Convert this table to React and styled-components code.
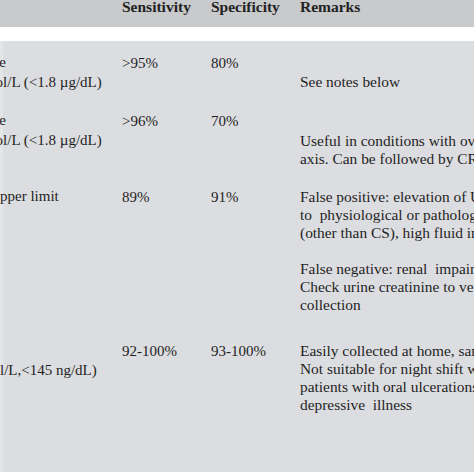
import React from 'react';
import styled, { createGlobalStyle } from 'styled-components';

const GlobalStyle = createGlobalStyle`
  html, body {
    margin: 0;
    padding: 0;
    background: #ffffff;
    overflow: hidden;
  }
  body {
    font-family: "Liberation Serif", "Times New Roman", serif;
    color: #1f1f1f;
  }
`;

const rows = [
  {
    height: 58,
    label: [{ text: 'e', shift: -0.8 }, { text: 'ol/L (<1.8 \u00b5g/dL)', shift: -4.4 }],
    sensitivity: '>95%',
    specificity: '80%',
    remarksOffset: 20,
    remarks: ['See notes below'],
  },
  {
    height: 76,
    label: [{ text: 'e', shift: -0.8 }, { text: 'ol/L (<1.8 \u00b5g/dL)', shift: -4.4 }],
    sensitivity: '>96%',
    specificity: '70%',
    remarksOffset: 21,
    remarks: ['Useful in conditions with overactive HPA', 'axis. Can be followed by CRH test'],
  },
  {
    height: 154,
    label: [{ text: 'pper limit', shift: 0 }],
    sensitivity: '89%',
    specificity: '91%',
    remarksOffset: 1,
    remarks: [
      'False positive: elevation of UFC due',
      'to  physiological or pathological hypercortisolism',
      '(other than CS), high fluid intake',
      '',
      'False negative: renal  impairment.',
      'Check urine creatinine to verify',
      'collection',
    ],
  },
  {
    height: 143,
    label: [{ text: '', shift: 0 }, { text: 'l/L,<145 ng/dL)', shift: 0 }],
    sensitivity: '92-100%',
    specificity: '93-100%',
    remarksOffset: 1,
    remarks: [
      'Easily collected at home, samples stable',
      'Not suitable for night shift workers,',
      'patients with oral ulcerations, or',
      'depressive  illness',
    ],
  },
];

const App = () => (
  <>
    <GlobalStyle />
    <Page>
      <HeaderBar>
        <HeadCell />
        <HeadCell>Sensitivity</HeadCell>
        <HeadCell>Specificity</HeadCell>
        <HeadCell>Remarks</HeadCell>
      </HeaderBar>
      <Gap />
      <Body>
        {rows.map((row, i) => (
          <Row key={i} height={row.height}>
            <LabelCell>
              {row.label.map((l, j) => (
                <LabelLine key={j} shift={l.shift}>
                  {l.text || '\u00a0'}
                </LabelLine>
              ))}
            </LabelCell>
            <ValueCell>{row.sensitivity}</ValueCell>
            <ValueCell>{row.specificity}</ValueCell>
            <RemarksCell offset={row.remarksOffset}>
              {row.remarks.map((r, j) => (
                <RemarkLine key={j}>{r || '\u00a0'}</RemarkLine>
              ))}
            </RemarksCell>
          </Row>
        ))}
      </Body>
    </Page>
  </>
);

export default App;

const columns = '122px 89px 89px 1fr';

const Page = styled.div`
  width: 474px;
  height: 474px;
  overflow: hidden;
  display: flex;
  flex-direction: column;
`;

const HeaderBar = styled.div`
  display: grid;
  grid-template-columns: ${columns};
  height: 27px;
  flex-shrink: 0;
  background: #c9cacc;
`;

const HeadCell = styled.div`
  font-size: 15.5px;
  font-weight: 700;
  line-height: 14px;
  color: #222;
  white-space: nowrap;
`;

const Gap = styled.div`
  height: 14px;
  flex-shrink: 0;
  background: #ffffff;
`;

const Body = styled.div`
  flex-shrink: 0;
  background: linear-gradient(to right, #e4e5e7 0 3px, #dcdde0 3px);
`;

const Row = styled.div`
  display: grid;
  grid-template-columns: ${columns};
  height: ${(p) => p.height}px;
  box-sizing: border-box;
  padding-top: 12px;
  font-size: 15px;
`;

const LabelCell = styled.div`
  min-width: 0;
  line-height: 19.6px;
`;

const LabelLine = styled.div`
  white-space: nowrap;
  margin-left: ${(p) => p.shift}px;
`;

const ValueCell = styled.div`
  padding-top: 1px;
  line-height: 18px;
  white-space: nowrap;
`;

const RemarksCell = styled.div`
  min-width: 0;
  padding-top: ${(p) => p.offset}px;
  font-size: 15.4px;
  line-height: 18px;
`;

const RemarkLine = styled.div`
  white-space: pre;
`;
